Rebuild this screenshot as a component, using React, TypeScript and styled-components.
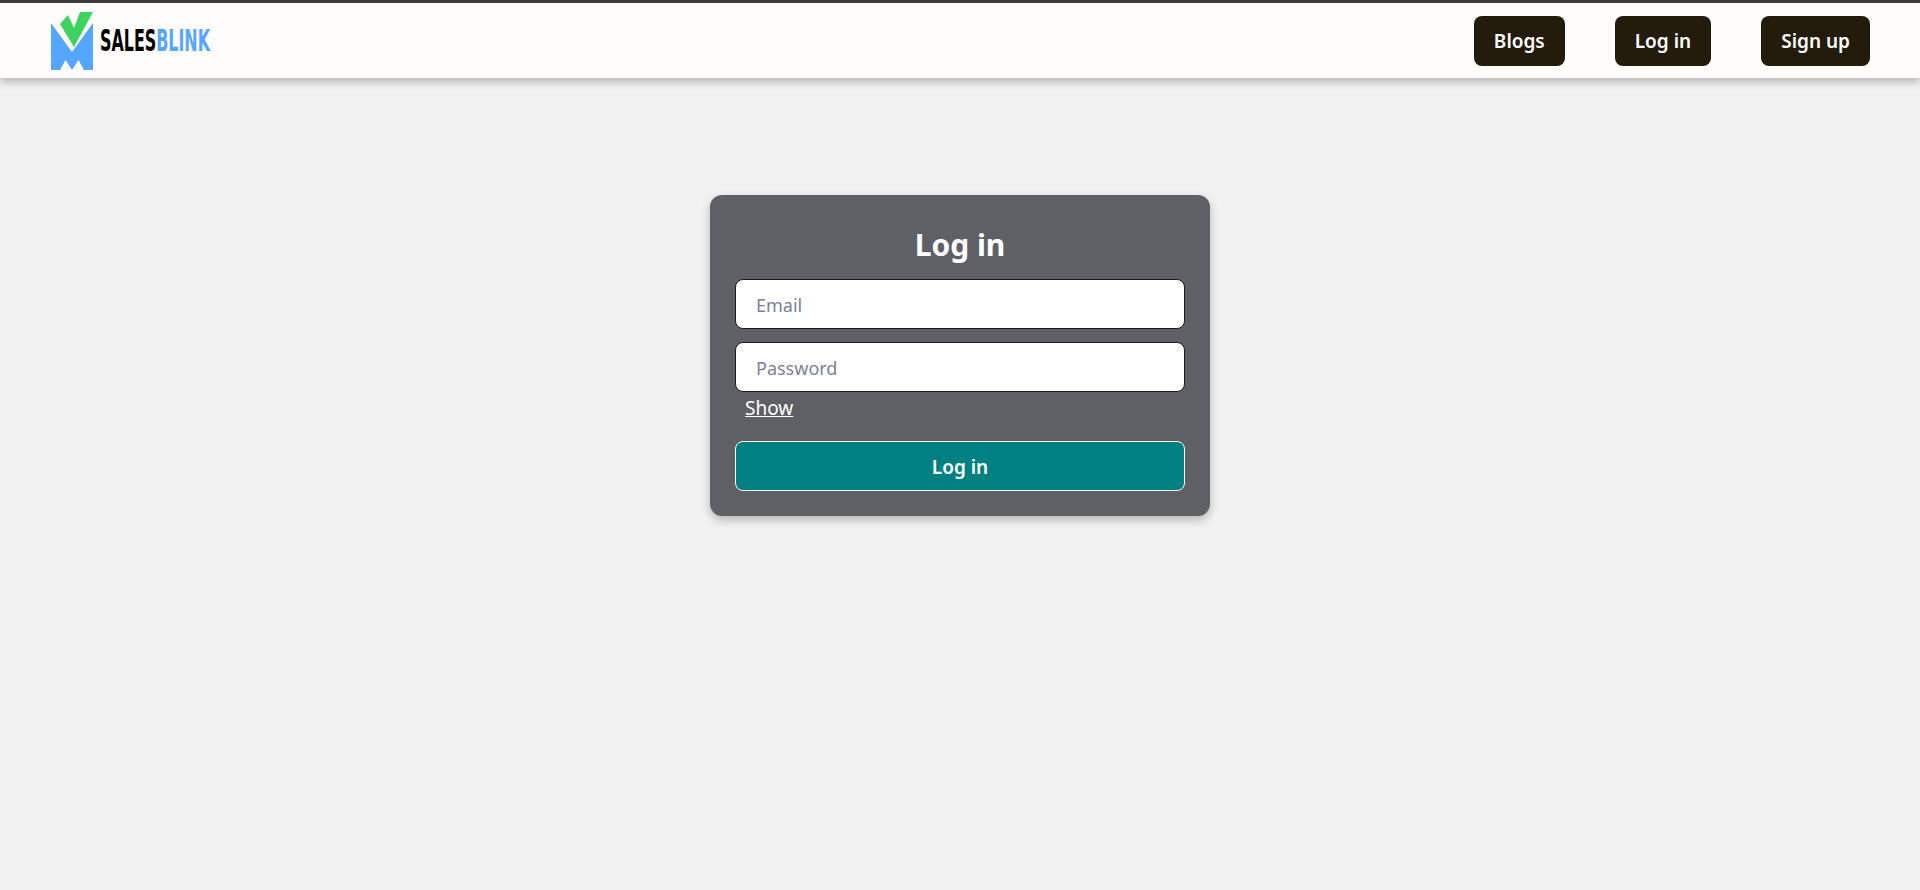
import { FC } from "react";
import styled, { createGlobalStyle } from "styled-components";

const GlobalStyle = createGlobalStyle`
  * {
    box-sizing: border-box;
  }
  html, body {
    margin: 0;
    padding: 0;
    background: #f2f2f3;
    font-family: "Noto Sans", "Open Sans", "Liberation Sans", sans-serif;
  }
`;

const App: FC = () => {
    return (
        <Page>
            <GlobalStyle />
            <Header>
                <Logo href="#">
                    <svg width="42" height="58" viewBox="51 12 42 58">
                        <path fill="#55a6ff" d="M51 23 L72 52 L93 23 V70 H84 L78.5 60 L72 70 L65.5 60 L60 70 H51 Z" />
                        <path fill="#3cd35f" d="M60 24 L68 15 L74 28 L80 12 H93 L74 47 Z" />
                    </svg>
                    <Brand>SALES<BrandBlue>BLINK</BrandBlue></Brand>
                </Logo>
                <Nav>
                    <NavButton>Blogs</NavButton>
                    <NavButton>Log in</NavButton>
                    <NavButton>Sign up</NavButton>
                </Nav>
            </Header>
            <Main>
                <Card>
                    <Title>Log in</Title>
                    <Input type="email" placeholder="Email" />
                    <Input type="password" placeholder="Password" />
                    <ShowLink>Show</ShowLink>
                    <Submit>Log in</Submit>
                </Card>
            </Main>
        </Page>
    );
};

const Page = styled.div`
  min-height: 890px;
  background: #f2f2f3;
`;

const Header = styled.header`
  height: 78px;
  padding: 1px 50px 0 51px;
  display: flex;
  align-items: center;
  justify-content: space-between;
  background: #fefdfb;
  border-top: 3px solid #3b3b3b;
  box-shadow: 0 4px 8px rgba(0, 0, 0, 0.25);
`;

const Logo = styled.a`
  display: flex;
  align-items: center;
  gap: 7px;
  text-decoration: none;
`;

const Brand = styled.span`
  font-family: "DejaVu Sans", sans-serif;
  font-size: 30px;
  line-height: 30px;
  font-weight: 700;
  white-space: nowrap;
  transform: scaleX(0.53);
  transform-origin: left center;
  color: #000;
`;

const BrandBlue = styled.span`
  color: #55a6ff;
`;

const Nav = styled.nav`
  display: flex;
  gap: 50px;
`;

const NavButton = styled.button`
  height: 50px;
  padding: 0 20px;
  background: #231b0c;
  color: #fff;
  border: none;
  border-radius: 8px;
  font-family: inherit;
  font-size: 19px;
  font-weight: 600;
`;

const Main = styled.main`
  display: flex;
  justify-content: center;
  padding-top: 117px;
`;

const Card = styled.form`
  width: 500px;
  padding: 25px;
  display: flex;
  flex-direction: column;
  background: #5f6066;
  border-radius: 12px;
  box-shadow: 0 4px 10px rgba(0, 0, 0, 0.25);
`;

const Title = styled.h2`
  margin: 8px 0 17px;
  text-align: center;
  color: #fff;
  font-size: 30px;
  line-height: 34px;
  font-weight: 700;
`;

const Input = styled.input`
  height: 50px;
  margin-bottom: 13px;
  padding: 2px 20px 0;
  background: #fff;
  border: 1px solid #171b26;
  border-radius: 8px;
  font-family: inherit;
  font-size: 18px;

  &::placeholder {
    color: #7a819b;
    opacity: 1;
  }

  &:last-of-type {
    margin-bottom: 0;
  }
`;

const ShowLink = styled.a`
  align-self: flex-start;
  margin: 4px 0 21px 10px;
  color: #fff;
  font-size: 19px;
  line-height: 24px;
  text-decoration: underline;
`;

const Submit = styled.button`
  height: 50px;
  padding-top: 2px;
  background: #008080;
  color: #fff;
  border: 1px solid #fff;
  border-radius: 8px;
  font-family: inherit;
  font-size: 19px;
  font-weight: 600;
`;

export default App;
